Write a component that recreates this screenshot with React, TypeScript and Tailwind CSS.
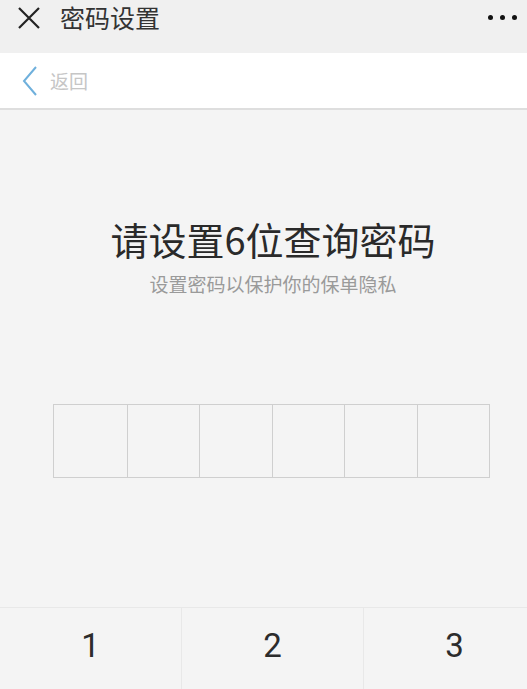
import React from "react";

const FONT = { fontFamily: '"Noto Sans CJK SC", "Noto Sans", sans-serif' };

const KEYS = ["1", "2", "3"];

export default function App() {
  return (
    <div
      className="w-[527px] h-[689px] overflow-hidden bg-[#f4f4f4] flex flex-col"
      style={FONT}
    >
      {/* top title bar */}
      <div className="h-[53px] bg-[#f0f0f0] flex items-start pt-[1px]">
        <svg className="ml-[17px] mt-[6px]" width="24" height="22" viewBox="0 0 24 22">
          <path d="M2 1 L22 21 M22 1 L2 21" stroke="#222" strokeWidth="2.2" fill="none" />
        </svg>
        <span className="ml-[19px] text-[25px] leading-[32px] text-[#333]">密码设置</span>
        <div className="ml-auto mr-[10px] mt-[14px] flex gap-[7px]">
          <span className="w-[5px] h-[5px] rounded-full bg-[#111]" />
          <span className="w-[5px] h-[5px] rounded-full bg-[#111]" />
          <span className="w-[5px] h-[5px] rounded-full bg-[#111]" />
        </div>
      </div>

      {/* back bar */}
      <div className="h-[57px] bg-white border-b-2 border-[#dedede] flex items-center">
        <svg className="ml-[21px]" width="18" height="30" viewBox="0 0 18 30">
          <path d="M15 1 L3 15 L15 29" stroke="#6fb0dc" strokeWidth="2" fill="none" />
        </svg>
        <span className="ml-[11px] text-[19px] leading-none text-[#c6c6c6]">返回</span>
      </div>

      {/* heading */}
      <div className="flex flex-col items-center mt-[104px] pl-[19px]">
        <h1 className="text-[38px] leading-[50px] text-[#2a2a2a]">请设置6位查询密码</h1>
        <p className="mt-[7px] text-[19px] leading-[26px] text-[#9a9a9a]">
          设置密码以保护你的保单隐私
        </p>
      </div>

      {/* code boxes */}
      <div className="mt-[107px] ml-[53px] w-[437px] h-[74px] grid grid-cols-6 border border-[#cfcfcf]">
        {[0, 1, 2, 3, 4, 5].map((i) => (
          <div key={i} className={i === 0 ? "" : "border-l border-[#cfcfcf]"} />
        ))}
      </div>

      {/* keypad */}
      <div className="mt-auto h-[82px] border-t border-[#e8e8e8] grid grid-cols-[181px_182px_182px]">
        {KEYS.map((k, i) => (
          <div
            key={k}
            className={
              "flex items-center justify-center text-[33px] text-[#2c2c2c] pb-[6px] " +
              (i === 0 ? "" : "border-l border-[#e8e8e8]")
            }
            style={{ fontFamily: 'Roboto, "Noto Sans", sans-serif' }}
          >
            {k}
          </div>
        ))}
      </div>
    </div>
  );
}
